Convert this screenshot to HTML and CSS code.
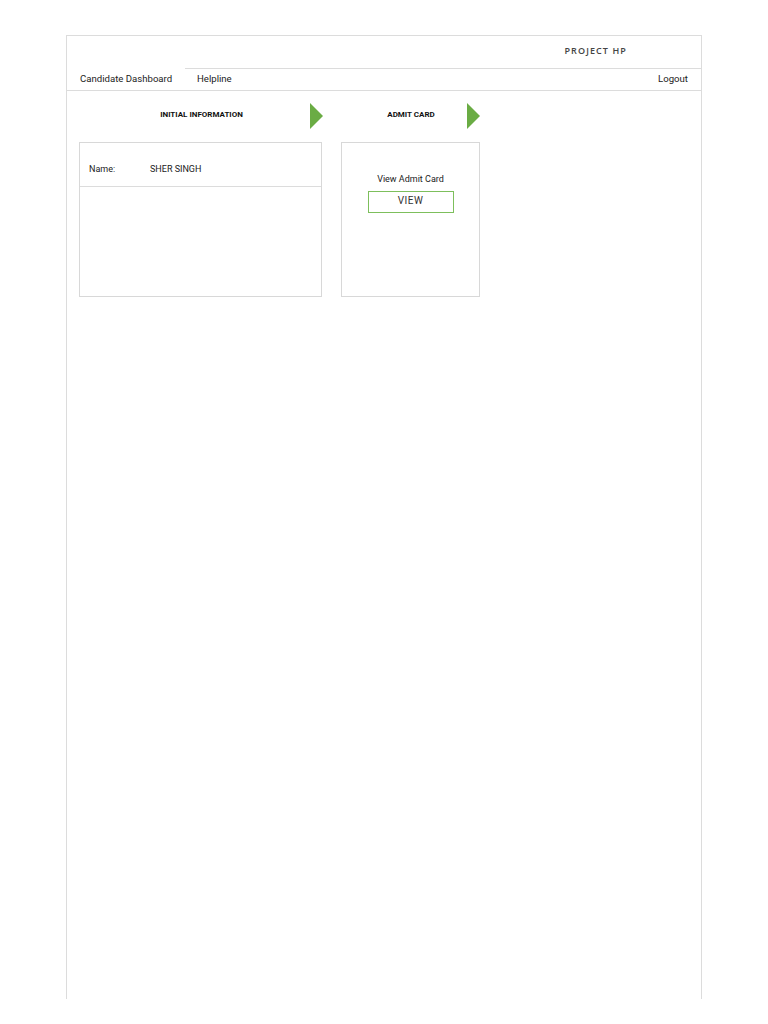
FILE: index.html
```html
<!DOCTYPE html>
<html>
<head>
<meta charset="utf-8">
<link rel="stylesheet" href="styles.css">
</head>
<body>
<div class="frame">
  <header class="top">
    <span class="brand">PROJECT HP</span>
  </header>
  <nav class="nav">
    <div class="tab active">Candidate Dashboard</div>
    <div class="nav-rest">
      <span class="tab">Helpline</span>
      <span class="tab logout">Logout</span>
    </div>
  </nav>
  <main class="content">
    <section class="col col-wide">
      <div class="step">
        <span class="step-label">INITIAL INFORMATION</span>
        <span class="arrow"></span>
      </div>
      <div class="card">
        <div class="row">
          <span class="key">Name:</span>
          <span class="val">SHER SINGH</span>
        </div>
      </div>
    </section>
    <section class="col col-narrow">
      <div class="step">
        <span class="step-label">ADMIT CARD</span>
        <span class="arrow"></span>
      </div>
      <div class="card card-center">
        <div class="admit-text">View Admit Card</div>
        <button class="btn">VIEW</button>
      </div>
    </section>
  </main>
</div>
</body>
</html>
```
FILE: styles.css
```css
* { box-sizing: border-box; }
body {
  margin: 0;
  font-family: Roboto, "Liberation Sans", sans-serif;
  color: #222;
  background: #fff;
}
.frame {
  margin: 35px 0 0 66px;
  width: 636px;
  height: 964px;
  border: 1px solid #dcdcdc;
  border-bottom: none;
}
.top {
  height: 32px;
  display: flex;
  align-items: center;
  justify-content: flex-end;
  padding-right: 74px;
  padding-bottom: 3px;
}
.brand {
  font-family: "Open Sans", "Liberation Sans", sans-serif;
  font-size: 9px;
  font-weight: 600;
  letter-spacing: 1.1px;
  color: #444;
}
.nav {
  display: flex;
  height: 23px;
  border-bottom: 1px solid #dcdcdc;
}
.tab {
  font-size: 9.6px;
  line-height: 12px;
  color: #222;
}
.tab.active {
  width: 118px;
  padding: 5px 0 0 13px;
}
.nav-rest {
  flex: 1;
  display: flex;
  justify-content: space-between;
  border-top: 1px solid #dcdcdc;
  padding: 4px 13px 0 12px;
}
.content {
  display: flex;
  gap: 18px;
  padding-left: 12px;
}
.col-wide { width: 244px; }
.col-narrow { width: 139px; }
.step {
  height: 51px;
  display: flex;
  align-items: center;
  padding-bottom: 1px;
}
.step-label {
  flex: 1;
  text-align: center;
  font-size: 8px;
  font-weight: 700;
  color: #111;
  margin-top: -4px;
  padding-left: 14px;
}
.arrow {
  width: 0;
  height: 0;
  border-top: 13px solid transparent;
  border-bottom: 13px solid transparent;
  border-left: 13px solid #6aac44;
}
.card {
  height: 155px;
  border: 1px solid #d8d8d8;
}
.col-wide .card { width: 243px; }
.row {
  height: 44px;
  border-bottom: 1px solid #dcdcdc;
  display: flex;
  padding: 20px 0 0 9px;
  font-size: 9px;
  line-height: 12px;
  color: #222;
}
.key { width: 61px; }
.card-center {
  display: flex;
  flex-direction: column;
  align-items: center;
  padding-top: 30px;
}
.admit-text {
  font-size: 9px;
  line-height: 12px;
  color: #222;
}
.btn {
  margin-top: 6px;
  width: 86px;
  height: 22px;
  border: 1px solid #7dbf5c;
  background: #fff;
  font-family: Roboto, "Liberation Sans", sans-serif;
  font-size: 10px;
  letter-spacing: 0.5px;
  color: #333;
  padding: 0 0 4px;
}
```
